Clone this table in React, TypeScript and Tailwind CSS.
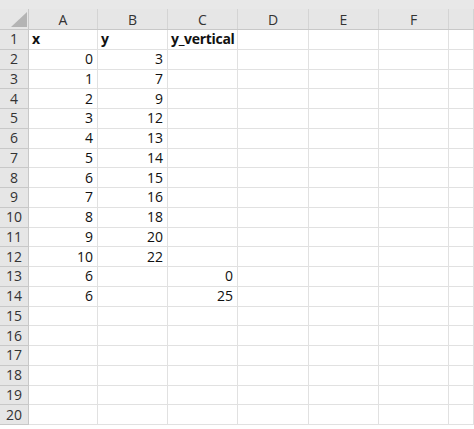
import React from "react";

const cols = ["A", "B", "C", "D", "E", "F", ""];

type Cell = { v: string; bold?: boolean; num?: boolean };

const xs = [0, 1, 2, 3, 4, 5, 6, 7, 8, 9, 10];
const ys = [3, 7, 9, 12, 13, 14, 15, 16, 18, 20, 22];

const rows: Cell[][] = [
  [{ v: "x", bold: true }, { v: "y", bold: true }, { v: "y_vertical", bold: true }],
  ...xs.map((x, i) => [
    { v: String(x), num: true },
    { v: String(ys[i]), num: true },
  ]),
  [{ v: "6", num: true }, { v: "" }, { v: "0", num: true }],
  [{ v: "6", num: true }, { v: "" }, { v: "25", num: true }],
];

while (rows.length < 20) rows.push([]);

const gridCols = "grid grid-cols-[29px_69px_70px_70px_71px_70px_70px_1fr]";

export default function App() {
  return (
    <div
      className="w-[474px] h-[429px] overflow-hidden bg-white text-[#111]"
      style={{ fontFamily: '"Open Sans", "Liberation Sans", sans-serif' }}
    >
      <div className="h-[9px] bg-[#e8e8e8]" />
      <div className={`${gridCols} h-[21px] bg-[#e6e6e6] border-b border-[#c8c8c8]`}>
        <div className="relative border-r border-[#c8c8c8]">
          <svg width="29" height="20" className="absolute left-0 top-0">
            <polygon points="27,3 27,18 11,18" fill="#b4b4b4" />
          </svg>
        </div>
        {cols.map((c, i) => (
          <div
            key={i}
            className="flex items-center justify-center pt-[2px] border-r border-[#d4d4d4] text-[14px] text-[#333] leading-none"
          >
            {c}
          </div>
        ))}
      </div>
      {rows.map((r, ri) => (
        <div key={ri} className={`${gridCols} h-[19.75px]`}>
          <div className="flex items-center justify-center bg-[#e6e6e6] border-r border-b border-[#c8c8c8] text-[14px] text-[#333] leading-none">
            {ri + 1}
          </div>
          {cols.map((_, ci) => {
            const cell = r[ci];
            return (
              <div
                key={ci}
                className={`flex items-center border-r border-b border-[#e1e1e1] text-[14px] leading-none whitespace-nowrap ${
                  cell?.num ? "justify-end pr-[4px]" : "justify-start pl-[3px]"
                } ${cell?.bold ? "font-bold tracking-[-0.3px]" : ""}`}
              >
                {cell?.v}
              </div>
            );
          })}
        </div>
      ))}
    </div>
  );
}
